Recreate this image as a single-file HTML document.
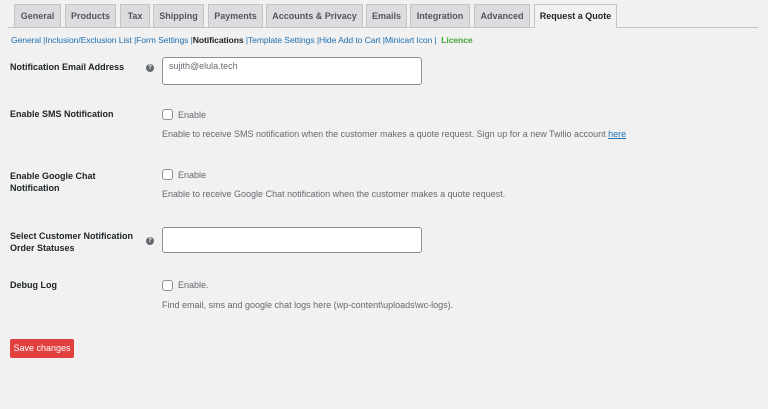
<!DOCTYPE html>
<html><head><style>
body{margin:0;width:768px;height:409px;background:#f1f1f1;font-family:"Liberation Sans",sans-serif;font-size:9px;color:#3c434a;position:relative;overflow:hidden}
.a{position:absolute;white-space:nowrap}
.tab{position:absolute;top:4px;height:23px;background:#dcdcde;border:1px solid #c3c4c7;border-bottom:none;box-sizing:border-box;font-weight:bold;color:#50575e;line-height:23px;text-align:center;font-size:9px}
.tab.on{background:#f1f1f1;color:#1d2327;height:24px}
.line{position:absolute;top:27px;left:8px;width:750px;height:1px;background:#c3c4c7}
.b{font-weight:bold;color:#1d2327}
.box{position:absolute;background:#fff;border:1px solid #8c8f94;border-radius:3px;box-sizing:border-box}
.cb{position:absolute;width:11px;height:11px;border:1px solid #8c8f94;border-radius:3px;background:#fff;box-sizing:border-box}
.d{color:#646970}
.q{position:absolute;width:8px;height:8px;border-radius:50%;background:#646970;color:#fff;font-size:6px;line-height:8px;text-align:center;font-weight:bold}
a{color:#2271b1}
</style></head><body>
<div class="line"></div>
<div class="tab" style="left:14px;width:47px">General</div>
<div class="tab" style="left:65px;width:51px">Products</div>
<div class="tab" style="left:120px;width:30px">Tax</div>
<div class="tab" style="left:153px;width:51px">Shipping</div>
<div class="tab" style="left:208px;width:55px">Payments</div>
<div class="tab" style="left:266px;width:97px">Accounts &amp; Privacy</div>
<div class="tab" style="left:366px;width:41px">Emails</div>
<div class="tab" style="left:410px;width:60px">Integration</div>
<div class="tab" style="left:474px;width:56px">Advanced</div>
<div class="tab on" style="left:534px;width:83px">Request a Quote</div>
<div class="a" style="left:11px;top:35px;color:#2271b1;font-size:8.6px;letter-spacing:-0.1px">General |Inclusion/Exclusion List |Form Settings |<b style="color:#1d2327">Notifications</b> |Template Settings |Hide Add to Cart |Minicart Icon | &nbsp;<b style="color:#46a53a">Licence</b></div>
<div class="a b" style="left:10px;top:62px">Notification Email Address</div>
<div class="q" style="left:146px;top:64px">?</div>
<div class="box" style="left:162px;top:57px;width:260px;height:28px"><span class="a d" style="left:6px;top:3px">sujith@elula.tech</span></div>
<div class="a b" style="left:10px;top:109px">Enable SMS Notification</div>
<div class="cb" style="left:162px;top:109px"></div>
<div class="a d" style="left:178px;top:110px">Enable</div>
<div class="a d" style="left:162px;top:129px">Enable to receive SMS notification when the customer makes a quote request. Sign up for a new Twilio account <a href="#">here</a></div>
<div class="a b" style="left:10px;top:170px;line-height:12px">Enable Google Chat<br>Notification</div>
<div class="cb" style="left:162px;top:169px"></div>
<div class="a d" style="left:178px;top:170px">Enable</div>
<div class="a d" style="left:162px;top:189px">Enable to receive Google Chat notification when the customer makes a quote request.</div>
<div class="a b" style="left:10px;top:230px;line-height:12px">Select Customer Notification<br>Order Statuses</div>
<div class="q" style="left:146px;top:237px">?</div>
<div class="box" style="left:162px;top:227px;width:260px;height:26px"></div>
<div class="a b" style="left:10px;top:280px">Debug Log</div>
<div class="cb" style="left:162px;top:280px"></div>
<div class="a d" style="left:178px;top:280px">Enable.</div>
<div class="a d" style="left:162px;top:300px">Find email, sms and google chat logs here (wp-content\uploads\wc-logs).</div>
<div class="a" style="left:10px;top:339px;width:64px;height:19px;background:#e2403f;border-radius:2px;color:#fff;line-height:19px;text-align:center">Save changes</div>
</body></html>
